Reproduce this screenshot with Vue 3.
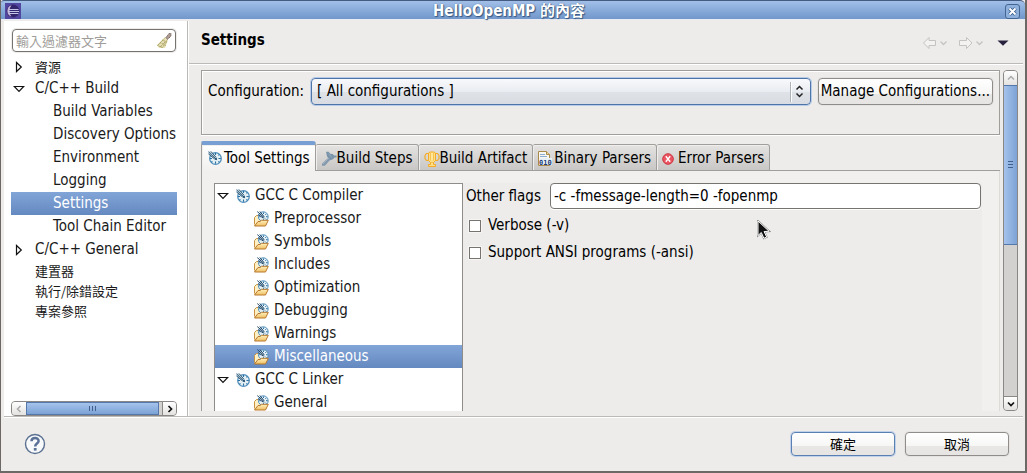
<script setup>
import { ref } from 'vue'

const navItems = [
  { label: '資源', level: 0, arrow: 'closed', cjk: true },
  { label: 'C/C++ Build', level: 0, arrow: 'open' },
  { label: 'Build Variables', level: 1 },
  { label: 'Discovery Options', level: 1 },
  { label: 'Environment', level: 1 },
  { label: 'Logging', level: 1 },
  { label: 'Settings', level: 1 },
  { label: 'Tool Chain Editor', level: 1 },
  { label: 'C/C++ General', level: 0, arrow: 'closed' },
  { label: '建置器', level: 0, cjk: true },
  { label: '執行/除錯設定', level: 0, cjk: true },
  { label: '專案參照', level: 0, cjk: true }
]
const tabs = [
  { label: 'Tool Settings', icon: 'compass' },
  { label: 'Build Steps', icon: 'hammer' },
  { label: 'Build Artifact', icon: 'trophy' },
  { label: 'Binary Parsers', icon: 'binary' },
  { label: 'Error Parsers', icon: 'error' }
]
const tools = [
  { label: 'GCC C Compiler', group: true },
  { label: 'Preprocessor' },
  { label: 'Symbols' },
  { label: 'Includes' },
  { label: 'Optimization' },
  { label: 'Debugging' },
  { label: 'Warnings' },
  { label: 'Miscellaneous' },
  { label: 'GCC C Linker', group: true },
  { label: 'General' }
]
const page = ref('Settings')
const tab = ref('Tool Settings')
const tool = ref('Miscellaneous')
const filter = ref('')
const flags = ref('-c -fmessage-length=0 -fopenmp')
const verbose = ref(false)
const ansi = ref(false)
</script>

<template>
  <div class="window">
    <svg class="defs" width="0" height="0" aria-hidden="true">
      <defs>
        <linearGradient id="folderFill" x1="0" y1="0" x2="0" y2="1">
          <stop offset="0" stop-color="#fff0bd" />
          <stop offset="1" stop-color="#efbf62" />
        </linearGradient>
        <symbol id="compass" viewBox="0 0 14 14">
          <circle cx="7.5" cy="7.5" r="5.8" fill="#e2f0f5" stroke="#4f8ebb" stroke-width="1.3" />
          <path d="M7.5 2v2M7.5 10.5v2.2M2 7.5h2M10.5 7.5h2.3M3.4 11.4l1-1M11.4 11.4l-1-1M11.4 3.4l-1 1" stroke="#2f6f9f" stroke-width="1.1" />
          <path d="M0.5 .5h2.5l5.4 6.2-1.6 1.6L.5 3.5z" fill="#b9cddb" />
          <path d="M0.5 .8l8 7.8M3 .5l5.2 6M.6 3l6 5" stroke="#25506f" stroke-width=".9" />
          <circle cx="8" cy="8" r="1.1" fill="#1d476a" />
        </symbol>
        <symbol id="folder" viewBox="0 0 16 16">
          <path d="M1.5 13.5V6.5l2-2h3l1 2h5v6" fill="#fff0c4" stroke="#c99242" />
          <circle cx="10.3" cy="5.7" r="4.9" fill="#e4f1f6" stroke="#4f8ebb" />
          <path d="M10.5 1.5v1.5M10.5 8.2v1.6M6.2 5.7h1.5M13 5.7h1.7M13.3 2.9l-1 1M13.3 8.6l-1-1" stroke="#2f6f9f" />
          <path d="M4.3 .6l7 6.2M6.8 .4l4.4 5.4M5.4 3.6l5 3.6" stroke="#23486a" />
          <path d="M1.5 15l3.5-4.5h2l1.5-1.2h6.8L12.5 15z" fill="url(#folderFill)" stroke="#b8782c" />
        </symbol>
        <symbol id="hammer" viewBox="0 0 16 16">
          <path d="M1 12.8L7.5 6.4 9.6 8.4 3.8 14.8H1z" fill="#8299ad" />
          <path d="M5 .8h2.6l1.6 1.9 2.4.2 1.4 1.6H15.6v2H13.4l-1.2 1.6-2.6 1.2L6 5.6z" fill="#7893aa" />
          <path d="M2 13l6-6M7.6 3l3.4 3.4" stroke="#a3b5c3" stroke-width=".8" />
        </symbol>
        <symbol id="trophy" viewBox="0 0 16 16">
          <path d="M4.5 2.5H2.5L1 4.5v3l1.5 2H5M11.5 2.5h2L15 4.5v3l-1.5 2H11" fill="none" stroke="#f4ac27" stroke-width="1.2" />
          <path d="M4.5 2l1.5-1h4l1.5 1v7.5l-2 2v2h2v2h-7v-2h2v-2l-2-2z" fill="#ffdf85" stroke="#f4ac27" />
          <path d="M6.5 2v7.5M9.5 2v7.5M6 11.5h4" stroke="#f6b840" stroke-width=".8" />
          <path d="M8 2v7" stroke="#fff0b4" />
        </symbol>
        <symbol id="binary" viewBox="0 0 14 16">
          <path d="M.5 .5h8l3 3v11H.5z" fill="#f8f8f0" stroke="#aa8a48" />
          <path d="M8.5 .5v3h3" fill="#ead8a2" stroke="#aa8a48" />
          <path d="M2 3.5h5M2 5.5h7" stroke="#8baccf" />
          <path d="M2 7h12v7H2z" fill="#eaf1f6" />
          <text x="1" y="13.5" class="bits">010</text>
        </symbol>
        <symbol id="error" viewBox="0 0 12 12">
          <circle cx="6" cy="6" r="5.3" fill="#ea5562" stroke="#cf3642" />
          <path d="M3.8 3.2l4.4 5.6M8.2 3.2L3.8 8.8" stroke="#fff" stroke-width="1.4" />
        </symbol>
      </defs>
    </svg>

    <header class="titlebar">
      <svg class="app-icon" width="16" height="16" viewBox="0 0 16 16" aria-hidden="true">
        <path d="M0 0h16v16H0z" fill="#5146a0" />
        <circle cx="8" cy="8" r="6.4" fill="#33256d" />
        <path d="M6.5 2.3a6 6 0 0 0 0 11.4A9 9 0 0 1 6.5 2.3z" fill="#c9b5d6" />
        <path d="M3.5 6.5h10M3 8.5h11M3.5 10.5h10" stroke="#c3c5e8" />
      </svg>
      <h1>HelloOpenMP 的內容</h1>
      <button class="close" type="button" aria-label="Close">
        <svg width="9" height="9" viewBox="0 0 9 9"><path d="M1.5 1.5l6 6M7.5 1.5l-6 6" stroke="#355987" stroke-width="3.6" /><path d="M1.5 1.5l6 6M7.5 1.5l-6 6" stroke="#fff" stroke-width="2" /></svg>
      </button>
    </header>

    <div class="body">
      <aside class="sidebar">
        <div class="filter">
          <input v-model="filter" type="text" placeholder="輸入過濾器文字" aria-label="輸入過濾器文字" />
          <button type="button" aria-label="Clear">
            <svg width="16" height="17" viewBox="0 0 16 17">
              <path d="M9 5l3 3-3 8H3L1 13z" fill="#e5dfb3" />
              <path d="M2 13l7-7M4 15l7-7M6.5 15.5l4-6M1.5 13.5l5 2M4 10.5l6 3M6.5 8l5 2.5" stroke="#99904f" stroke-dasharray="1 1" />
              <path d="M10 5.5l3-4h2v2.5l-3.5 3.5z" fill="#ad9b91" stroke="#75645e" stroke-dasharray="1.5 .7" />
            </svg>
          </button>
        </div>
        <ul class="nav">
          <li v-for="item in navItems" :key="item.label">
            <button type="button" class="row nav-row" :class="{ cjk: item.cjk, child: item.level, selected: page === item.label }" @click="page = item.label">
              <span v-if="!item.level" class="twist">
                <svg v-if="item.arrow === 'closed'" width="8" height="12" viewBox="0 0 8 12"><path d="M1.5 1.5v9L6.3 6z" fill="#fff" stroke="#111" stroke-width="1.2" /></svg>
                <svg v-else-if="item.arrow === 'open'" width="12" height="8" viewBox="0 0 12 8"><path d="M1.3 1.5h9.4L6 6.3z" fill="#fff" stroke="#111" stroke-width="1.2" /></svg>
              </span>
              <span>{{ item.label }}</span>
            </button>
          </li>
        </ul>
        <div class="hscroll">
          <button type="button" class="cap left" aria-label="Scroll left"><svg width="6" height="8" viewBox="0 0 6 8"><path d="M4.5 1L1.5 4l3 3" fill="none" stroke="#aaa" stroke-width="1.5" /></svg></button>
          <div class="thumb"><i></i><i></i><i></i></div>
          <button type="button" class="cap right" aria-label="Scroll right"><svg width="6" height="8" viewBox="0 0 6 8"><path d="M1.5 1l3 3-3 3" fill="none" stroke="#111" stroke-width="1.7" /></svg></button>
        </div>
      </aside>

      <main class="main">
        <div class="heading">
          <h2>Settings</h2>
          <div class="history">
            <button type="button" aria-label="Back">
              <svg width="26" height="14" viewBox="0 0 26 14" fill="none" stroke="#c4c3c0"><path d="M1.5 7L7 1.5V4.5h6.5v5H7v3z" fill="#f3f2f0" /><path d="M18.5 5.5l3 3 3-3" stroke-width="1.3" /></svg>
            </button>
            <button type="button" aria-label="Forward">
              <svg width="26" height="14" viewBox="0 0 26 14" fill="none" stroke="#c4c3c0"><path d="M14 7L8.5 1.5V4.5H1.5v5h7v3z" fill="#f3f2f0" /><path d="M18.5 5.5l3 3 3-3" stroke-width="1.3" /></svg>
            </button>
            <button type="button" aria-label="Menu">
              <svg width="12" height="6" viewBox="0 0 12 6"><path d="M.5 .5h11L6 5.7z" fill="#28223f" /></svg>
            </button>
          </div>
        </div>

        <div class="viewport">
          <div class="content">
            <section class="config">
              <label for="config">Configuration:</label>
              <div class="combo">
                <select id="config"><option>[ All configurations ]</option></select>
                <svg width="18" height="20" viewBox="0 0 18 20" aria-hidden="true"><path d="M1.5 0v20" stroke="#aeb2b9" /><path d="M2.5 0v20" stroke="#fff" /><path d="M7.5 7.5l3-3 3 3M7.5 11.5l3 3 3-3" fill="none" stroke="#222" stroke-width="1.5" /></svg>
              </div>
              <button type="button" class="push">Manage Configurations...</button>
            </section>

            <section class="folder-tabs">
              <div class="tabs" role="tablist">
                <button v-for="t in tabs" :key="t.label" type="button" role="tab" class="tab" :class="[t.icon, { active: tab === t.label }]" :aria-selected="tab === t.label" @click="tab = t.label">
                  <svg class="tab-icon" aria-hidden="true"><use :href="'#' + t.icon" /></svg>
                  <span>{{ t.label }}</span>
                </button>
              </div>
              <div class="panel">
                <ul class="tools">
                  <li v-for="t in tools" :key="t.label">
                    <button type="button" class="row tool-row" :class="{ group: t.group, selected: tool === t.label }" @click="tool = t.label">
                      <template v-if="t.group">
                        <svg width="12" height="8" viewBox="0 0 12 8"><path d="M1.3 1.5h9.4L6 6.3z" fill="#fff" stroke="#111" stroke-width="1.2" /></svg>
                        <svg class="group-icon" width="14" height="14"><use href="#compass" /></svg>
                      </template>
                      <svg v-else width="16" height="16"><use href="#folder" /></svg>
                      <span>{{ t.label }}</span>
                    </button>
                  </li>
                </ul>
                <form class="options" @submit.prevent>
                  <div class="flags">
                    <label for="flags">Other flags</label>
                    <input id="flags" v-model="flags" type="text" />
                  </div>
                  <label class="check"><input v-model="verbose" type="checkbox" />Verbose (-v)</label>
                  <label class="check"><input v-model="ansi" type="checkbox" />Support ANSI programs (-ansi)</label>
                </form>
              </div>
            </section>
          </div>
          <div class="vscroll">
            <button type="button" class="cap up" aria-label="Scroll up"><svg width="8" height="6" viewBox="0 0 8 6"><path d="M1 4.5l3-3 3 3" fill="none" stroke="#aaa" stroke-width="1.5" /></svg></button>
            <div class="thumb"><i></i><i></i><i></i></div>
            <div class="trough"></div>
            <button type="button" class="cap down" aria-label="Scroll down"><svg width="8" height="6" viewBox="0 0 8 6"><path d="M1 1.5l3 3 3-3" fill="none" stroke="#111" stroke-width="1.7" /></svg></button>
          </div>
        </div>
      </main>
    </div>

    <footer class="footer">
      <button type="button" class="help" aria-label="Help">
        <svg width="22" height="22" viewBox="0 0 22 22"><circle cx="11" cy="11" r="9.5" fill="#f8f9fb" stroke="#5b7191" stroke-width="1.4" /><path d="M7.5 8.3C7.5 4 14.6 4 14.6 8c0 2.6-3.4 2.6-3.4 5.4" fill="none" stroke="#5a7298" stroke-width="2.5" /><path d="M9.8 15h2.8v2.6H9.8z" fill="#5a7298" /></svg>
      </button>
      <div class="actions">
        <button type="button" class="push default">確定</button>
        <button type="button" class="push">取消</button>
      </div>
    </footer>

    <svg class="pointer" width="14" height="20" viewBox="0 0 14 20" aria-hidden="true">
      <path d="M1 1v14.5l3.3-3 2.6 5.8 2.8-1.3-2.6-5.4 4.9-.4z" fill="#111" stroke="#888" stroke-width="1.8" />
      <path d="M1 1v14.5l3.3-3 2.6 5.8 2.8-1.3-2.6-5.4 4.9-.4z" fill="#111" stroke="#fff" />
    </svg>
  </div>
</template>

<style>
body {
  background: #edeceb;
}
</style>

<style scoped>
* {
  box-sizing: border-box;
}
.window {
  position: relative;
  display: flex;
  flex-direction: column;
  height: 100vh;
  overflow: hidden;
  background: #edeceb;
  border: solid #6c6866;
  border-width: 0 2px 2px 1px;
  color: #1a1a1a;
  font: 15px/23px "DejaVu Sans Condensed", "Noto Sans CJK TC", sans-serif;
}
.defs {
  position: absolute;
}
button,
input,
select {
  margin: 0;
  padding: 0;
  border: 0;
  background: none;
  color: inherit;
  font: inherit;
}
svg {
  display: block;
  flex: none;
}
ul {
  margin: 0;
  padding: 0;
  list-style: none;
}
.bits {
  font: bold 7px "DejaVu Sans Mono", monospace;
  fill: #1c3d77;
}

.titlebar {
  display: flex;
  align-items: center;
  flex: none;
  height: 20px;
  padding: 2px 5px 0 4px;
  border-top: 1px solid #435b80;
  border-radius: 3px 5px 0 0;
  background: linear-gradient(#a2bfe8, #88abda 50%, #7297ca);
  border-bottom: 1px solid #e9edf3;
}
.app-icon {
  margin-bottom: 1px;
}
.titlebar h1 {
  flex: 1;
  margin: 0;
  padding-right: 8px;
  color: #fff;
  font: bold 15px/18px "DejaVu Sans Condensed", "Noto Sans CJK TC", sans-serif;
  text-align: center;
  text-shadow: 1px 1px 1px #34557f, 0 0 1px #34557f;
}
.close {
  display: grid;
  place-items: center;
  width: 15px;
  height: 15px;
  border: 1px solid #43658f;
  border-radius: 3px;
  background: #8eb0dd;
}

.body {
  display: flex;
  flex: 1;
  min-height: 0;
  padding: 1px 2px 0 3px;
}
.sidebar {
  display: flex;
  flex-direction: column;
  flex: none;
  width: 184px;
  padding: 8px 10px 0 7px;
  border-right: 1px solid #bcbab7;
  background: #fff;
}
.filter {
  display: flex;
  align-items: center;
  height: 23px;
  margin: 0 1px;
  padding: 0 3px;
  border: 1px solid #77736f;
  border-radius: 4px;
  box-shadow: 0 0 0 1px #edeceb;
}
.filter input {
  flex: 1;
  min-width: 0;
  height: 20px;
  outline: 0;
  font: 13px/20px "Noto Sans CJK TC", sans-serif;
}
.filter input::placeholder {
  color: #a09d99;
  opacity: 1;
}
.nav {
  flex: 1;
  min-height: 0;
  padding-top: 5px;
  overflow: hidden;
}
.row {
  display: flex;
  align-items: center;
  width: 100%;
  height: 23px;
  text-align: left;
  white-space: nowrap;
}
.row.cjk {
  height: 20px;
  font: 13px/20px "Noto Sans CJK TC", sans-serif;
}
.row.child {
  padding-left: 42px;
}
.row.selected {
  background: linear-gradient(#82a5d8, #6489c0);
  color: #fff;
}
.twist {
  display: grid;
  place-items: center;
  width: 15px;
  margin-right: 9px;
}
.hscroll {
  display: flex;
  height: 15px;
  border: 1px solid #8a8784;
  border-radius: 4px;
  overflow: hidden;
  background: #d3d1cf;
}
.cap {
  display: grid;
  place-items: center;
  flex: none;
  background: linear-gradient(#fff, #e3e2e0);
}
.cap.left,
.cap.right {
  width: 14px;
}
.cap.right {
  border-left: 1px solid #8a8784;
}
.thumb {
  display: flex;
  align-items: center;
  justify-content: center;
  gap: 2px;
  border: 1px solid #5478ab;
}
.hscroll .thumb {
  flex: 1;
  margin-right: 3px;
  background: linear-gradient(#a5c3ec, #7ca2d5);
}
.thumb i {
  background: #41608e;
}
.hscroll i {
  width: 1px;
  height: 5px;
}

.main {
  display: flex;
  flex-direction: column;
  flex: 1;
  min-width: 0;
  border-left: 1px solid #fff;
}
.heading {
  display: flex;
  align-items: center;
  justify-content: space-between;
  height: 43px;
  padding: 0 14px 4px 12px;
  border-bottom: 1px solid #bcbab7;
  box-shadow: 0 1px #fff;
}
.heading h2 {
  margin: 0;
  color: #000;
  font: bold 15px/23px "DejaVu Sans Condensed", sans-serif;
}
.history {
  display: flex;
  align-items: center;
  gap: 10px;
  padding-top: 5px;
}
.history button:last-child {
  margin-left: 3px;
}
.viewport {
  display: flex;
  flex: 1;
  min-height: 0;
  gap: 3px;
  padding: 6px 5px 5px 12px;
}
.content {
  display: flex;
  flex-direction: column;
  flex: 1;
  min-width: 0;
}
.config {
  display: flex;
  align-items: flex-start;
  gap: 7px;
  flex: none;
  height: 65px;
  padding: 7px 6px 0 6px;
  border: 1px solid #a09e9b;
  box-shadow: inset 1px 1px #fff, 0 1px #fff;
  color: #000;
}
.config label {
  line-height: 27px;
}
.combo {
  position: relative;
  flex: 1;
}
.combo select {
  appearance: none;
  display: block;
  width: 100%;
  height: 27px;
  padding: 0 24px 0 5px;
  border: 1px solid #4f75a8;
  border-radius: 4px;
  outline: 1px solid #b5cbe7;
  background: linear-gradient(#f8f9fc, #e9ecf1 50%, #dfe2e7 51%, #d9dde3);
}
.combo svg {
  position: absolute;
  top: 4px;
  right: 4px;
  pointer-events: none;
}
.push {
  height: 27px;
  padding: 0 2px;
  border: 1px solid #8f8c89;
  border-radius: 4px;
  background: linear-gradient(#fff, #f6f6f5 60%, #e8e7e5 61%, #e6e5e3);
  box-shadow: 0 0 0 1px #e4e3e1;
  color: #000;
}

.folder-tabs {
  display: flex;
  flex-direction: column;
  flex: 1;
  min-height: 0;
  padding-top: 6px;
}
.tabs {
  position: relative;
  z-index: 1;
  display: flex;
  align-items: flex-end;
  color: #000;
}
.tab {
  display: flex;
  align-items: center;
  height: 27px;
  padding: 2px 5px 0 5px;
  border: solid #a09e9b;
  border-width: 1px 1px 1px 0;
  border-radius: 2px 3px 0 0;
  background: linear-gradient(#e4e3e1, #c9c7c5);
  box-shadow: inset 1px 1px #f0efed;
}
.tab.active {
  height: 30px;
  padding: 0 5px 0 6px;
  border-width: 0 1px 0 1px;
  border-top: 4px solid #789fd3;
  background: linear-gradient(#fff, #f1f0ee);
}
.tab-icon {
  width: 16px;
  height: 16px;
}
.tab.compass .tab-icon {
  width: 14px;
  height: 14px;
  margin-right: 2px;
}
.tab.error .tab-icon {
  width: 12px;
  height: 12px;
  margin-right: 4px;
}
.tab.binary .tab-icon {
  width: 14px;
  margin-right: 2px;
}
.panel {
  display: flex;
  flex: 1;
  min-height: 0;
  margin-top: -1px;
  padding: 12px 18px 0 12px;
  border: solid #a09e9b;
  border-width: 1px 0 0 1px;
  background: #f1f0ee;
  box-shadow: inset -1px 0 #dddbd8;
}
.tools {
  flex: none;
  width: 249px;
  overflow: hidden;
  border: 1px solid #8f8c89;
  border-bottom: 0;
  background: #fff;
}
.tool-row {
  gap: 5px;
  padding-left: 38px;
}
.tool-row.group {
  padding-left: 2px;
}
.group-icon {
  margin-left: 2px;
}
.options {
  flex: 1;
  min-width: 0;
  padding: 0 1px 0 3px;
  background: #edeceb;
}
.flags {
  display: flex;
  align-items: center;
  gap: 9px;
  margin-bottom: 3px;
  color: #000;
}
.flags input {
  flex: 1;
  min-width: 0;
  height: 26px;
  padding: 0 3px;
  border: 1px solid #77736f;
  border-radius: 4px;
  outline: 0;
  background: #fff;
  box-shadow: 0 1px #fff;
}
.check {
  display: flex;
  align-items: center;
  gap: 7px;
  height: 27px;
  padding-left: 3px;
  color: #000;
}
.check input {
  appearance: none;
  width: 12px;
  height: 12px;
  border: 1px solid #77736f;
  background: #fff;
  box-shadow: 0 0 0 1px #f6f5f4;
}
.vscroll {
  display: flex;
  flex-direction: column;
  flex: none;
  width: 15px;
  border: 1px solid #8a8784;
  border-radius: 4px;
  overflow: hidden;
  background: #d3d1cf;
}
.cap.up,
.cap.down {
  height: 14px;
}
.cap.down {
  border-top: 1px solid #8a8784;
}
.vscroll .thumb {
  flex: 160;
  flex-direction: column;
  border-width: 1px 0;
  background: linear-gradient(90deg, #a5c3ec, #7ca2d5);
}
.vscroll i {
  width: 5px;
  height: 1px;
}
.trough {
  flex: 153;
}

.footer {
  display: flex;
  align-items: center;
  justify-content: space-between;
  flex: none;
  height: 55px;
  margin: 0 2px 0 3px;
  padding: 0 14px 1px 20px;
  border-top: 1px solid #bcbab7;
  box-shadow: inset 0 1px #fff;
}
.actions {
  display: flex;
  gap: 10px;
}
.actions .push {
  width: 104px;
  height: 24px;
  font: 13px/20px "Noto Sans CJK TC", sans-serif;
}
.push.default {
  border-color: #5a7fb3;
  box-shadow: 0 0 0 1px #c0d1e9;
}
.pointer {
  position: absolute;
  top: 220px;
  left: 756px;
}
</style>
